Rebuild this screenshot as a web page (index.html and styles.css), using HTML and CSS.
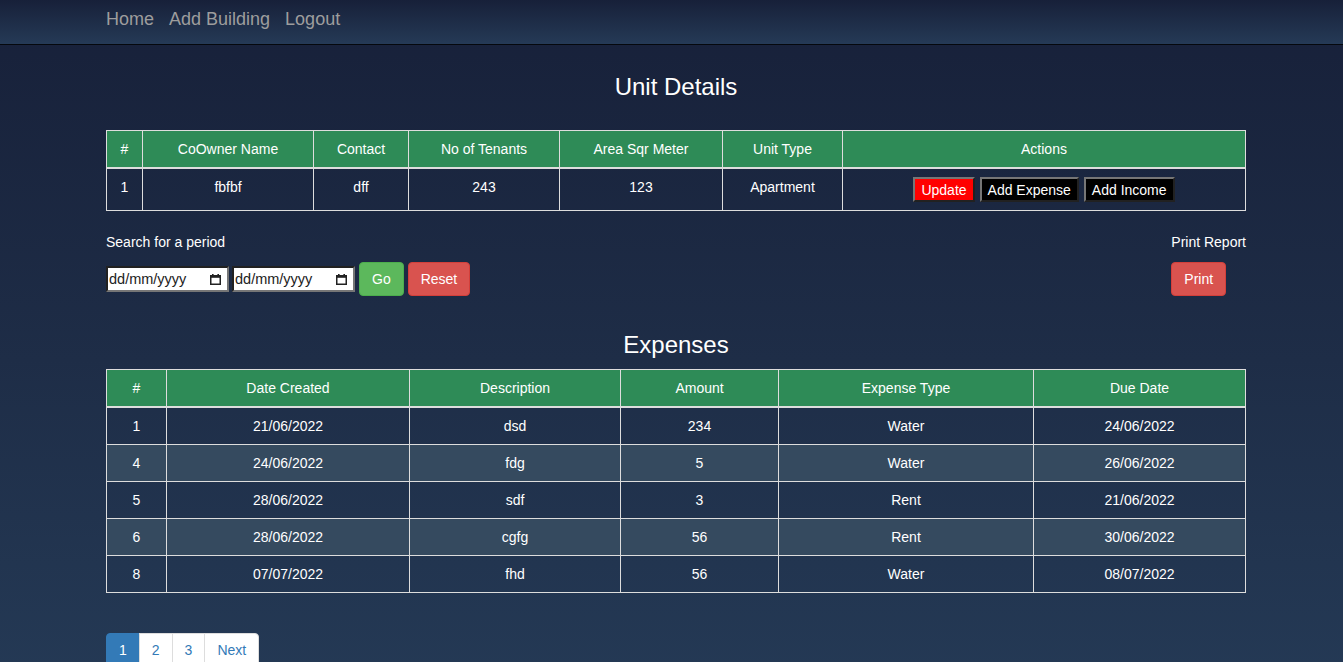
FILE: index.html
```html
<!DOCTYPE html>
<html>
<head>
<meta charset="utf-8">
<title>Unit Details</title>
<link rel="stylesheet" href="styles.css">
</head>
<body>
<nav class="navbar">
  <div class="nav-inner">
    <a class="nav-link" href="#">Home</a>
    <a class="nav-link" href="#">Add Building</a>
    <a class="nav-link" href="#">Logout</a>
  </div>
</nav>
<main class="container">
  <h3 class="title title-unit">Unit Details</h3>
  <table class="grid unit-table">
    <colgroup>
      <col style="width:36px"><col style="width:171px"><col style="width:95px"><col style="width:151px"><col style="width:163px"><col style="width:120px"><col>
    </colgroup>
    <thead>
      <tr><th>#</th><th>CoOwner Name</th><th>Contact</th><th>No of Tenants</th><th>Area Sqr Meter</th><th>Unit Type</th><th>Actions</th></tr>
    </thead>
    <tbody>
      <tr>
        <td>1</td><td>fbfbf</td><td>dff</td><td>243</td><td>123</td><td>Apartment</td>
        <td class="actions"><div class="act-row"><button class="act act-red">Update</button><button class="act">Add Expense</button><button class="act">Add Income</button></div></td>
      </tr>
    </tbody>
  </table>

  <div class="filters">
    <div class="search">
      <div class="label">Search for a period</div>
      <div class="controls">
        <label class="date date-first">
          <input class="date-input" type="text" placeholder="dd/mm/yyyy">
          <svg class="cal" width="11" height="11" viewBox="0 0 11 11"><rect x="2" y="0" width="1.6" height="2" fill="#222"/><rect x="7.4" y="0" width="1.6" height="2" fill="#222"/><rect x="0.75" y="1.75" width="9.5" height="8.5" fill="none" stroke="#222" stroke-width="1.5"/><rect x="0" y="1" width="11" height="2.8" fill="#222"/></svg>
        </label>
        <label class="date">
          <input class="date-input" type="text" placeholder="dd/mm/yyyy">
          <svg class="cal" width="11" height="11" viewBox="0 0 11 11"><rect x="2" y="0" width="1.6" height="2" fill="#222"/><rect x="7.4" y="0" width="1.6" height="2" fill="#222"/><rect x="0.75" y="1.75" width="9.5" height="8.5" fill="none" stroke="#222" stroke-width="1.5"/><rect x="0" y="1" width="11" height="2.8" fill="#222"/></svg>
        </label>
        <button class="btn btn-green">Go</button>
        <button class="btn btn-red">Reset</button>
      </div>
    </div>
    <div class="print">
      <div class="label">Print Report</div>
      <div class="controls">
        <button class="btn btn-red">Print</button>
      </div>
    </div>
  </div>

  <h3 class="title title-exp">Expenses</h3>
  <table class="grid exp-table">
    <colgroup>
      <col style="width:60px"><col style="width:243px"><col style="width:211px"><col style="width:158px"><col style="width:255px"><col>
    </colgroup>
    <thead>
      <tr><th>#</th><th>Date Created</th><th>Description</th><th>Amount</th><th>Expense Type</th><th>Due Date</th></tr>
    </thead>
    <tbody>
      <tr><td>1</td><td>21/06/2022</td><td>dsd</td><td>234</td><td>Water</td><td>24/06/2022</td></tr>
      <tr class="alt"><td>4</td><td>24/06/2022</td><td>fdg</td><td>5</td><td>Water</td><td>26/06/2022</td></tr>
      <tr><td>5</td><td>28/06/2022</td><td>sdf</td><td>3</td><td>Rent</td><td>21/06/2022</td></tr>
      <tr class="alt"><td>6</td><td>28/06/2022</td><td>cgfg</td><td>56</td><td>Rent</td><td>30/06/2022</td></tr>
      <tr><td>8</td><td>07/07/2022</td><td>fhd</td><td>56</td><td>Water</td><td>08/07/2022</td></tr>
    </tbody>
  </table>

  <ul class="pagination">
    <li class="page active"><a href="#">1</a></li>
    <li class="page"><a href="#">2</a></li>
    <li class="page"><a href="#">3</a></li>
    <li class="page"><a href="#">Next</a></li>
  </ul>
</main>
</body>
</html>
```
FILE: styles.css
```css
* { box-sizing: border-box; }
html {
  min-height: 100%;
  background: linear-gradient(180deg, #172039 0%, #1e2d47 50%, #253b57 100%);
}
body {
  margin: 0;
  font-family: "Liberation Sans", Arial, sans-serif;
  font-size: 14px;
  line-height: 20px;
  color: #ffffff;
  min-height: 720px;
}
.navbar {
  height: 45px;
  background: linear-gradient(180deg, #172039 0%, #253a56 100%);
  border-bottom: 1px solid #05080d;
}
.nav-inner {
  margin-left: 106px;
  display: flex;
  gap: 15px;
  padding-top: 8px;
}
.nav-link {
  font-size: 18px;
  line-height: 22px;
  color: #9d9d9d;
  text-decoration: none;
}
.container {
  width: 1140px;
  margin-left: 106px;
}
.title {
  font-size: 24px;
  font-weight: 500;
  line-height: 26px;
  text-align: center;
  margin: 0;
}
.title-unit { margin-top: 29px; margin-bottom: 30px; }
.title-exp { margin-top: 36px; margin-bottom: 11px; }
.grid {
  width: 1140px;
  border-collapse: collapse;
  table-layout: fixed;
  margin-bottom: 20px;
}
.grid th, .grid td {
  border: 1px solid #dddddd;
  text-align: center;
  padding: 8px;
  font-weight: normal;
}
.grid th {
  background: #2e8b57;
  border-bottom: 2px solid #dddddd;
  vertical-align: bottom;
}
.grid td { vertical-align: top; }
.grid .alt td { background: #354a5f; }
.actions { padding-top: 8px; padding-bottom: 8px; }
.act-row {
  display: flex;
  justify-content: center;
  gap: 5px;
}
.act {
  font: 14px/19px "Liberation Sans", Arial, sans-serif;
  color: #ffffff;
  background: #000000;
  border: 2px outset #767676;
  padding: 2px 6px 0;
  margin: 0;
  height: 25px;
}
.act-red { background: #ff0000; }
.filters {
  display: flex;
  justify-content: space-between;
  margin-top: 21px;
}
.label { margin-bottom: 10px; }
.controls {
  display: flex;
  align-items: center;
  gap: 4px;
}
.date {
  width: 123px;
  height: 26px;
  background: #fff;
  border: 2px inset #767676;
  display: flex;
  align-items: center;
  padding: 0 6px 0 1px;
}
.date-first { margin-right: -1px; }
.date-input {
  flex: 1;
  min-width: 0;
  border: 0;
  outline: none;
  padding: 0;
  margin: 0;
  background: transparent;
  font: 14.5px/20px "Liberation Sans", Arial, sans-serif;
  color: #222;
}
.date-input::placeholder { color: #222; opacity: 1; }
.cal { flex: none; display: block; }
.btn {
  font: 14px/20px "Liberation Sans", Arial, sans-serif;
  color: #fff;
  padding: 6px 12px;
  border-radius: 4px;
  border: 1px solid transparent;
  height: 34px;
  margin: 0;
}
.btn-green { background: #5cb85c; border-color: #4cae4c; }
.btn-red { background: #d9534f; border-color: #d43f3a; }
.pagination {
  list-style: none;
  padding: 0;
  margin: 40px 0 20px;
  display: flex;
}
.page a {
  display: block;
  padding: 6px 12px;
  line-height: 20px;
  color: #337ab7;
  background: #fff;
  border: 1px solid #dddddd;
  margin-left: -1px;
  text-decoration: none;
}
.page:first-child a {
  margin-left: 0;
  border-radius: 4px 0 0 4px;
}
.page:last-child a { border-radius: 0 4px 4px 0; }
.page.active a {
  background: #337ab7;
  border-color: #337ab7;
  color: #fff;
}
```
